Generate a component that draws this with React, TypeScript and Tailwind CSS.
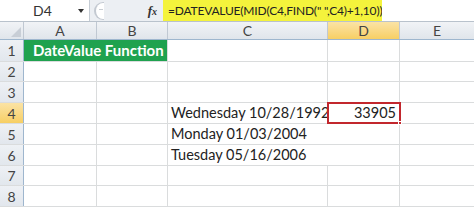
import React from "react";

const font = { fontFamily: "Lato, 'Open Sans', sans-serif" };

const rows = [
  { n: 1, h: "h-[22px]" },
  { n: 2, h: "h-[20px]" },
  { n: 3, h: "h-[21px]" },
  { n: 4, h: "h-[21px]" },
  { n: 5, h: "h-[21px]" },
  { n: 6, h: "h-[21px]" },
  { n: 7, h: "h-[20px]" },
  { n: 8, h: "h-[21px]" },
];

const cText: Record<number, string> = {
  4: "Wednesday 10/28/1992",
  5: "Monday 01/03/2004",
  6: "Tuesday 05/16/2006",
};

export default function App() {
  return (
    <div className="w-[474px] h-[209px] overflow-hidden bg-white text-[#222]" style={font}>
      {/* formula bar */}
      <div className="flex h-[22px] border-b border-[#b9c2cc]">
        <div className="w-[90px] flex items-center bg-white border-r border-[#c5ccd4] relative">
          <span className="ml-[33px] text-[14px] text-[#333]">D4</span>
          <span className="absolute left-[78px] top-[9px] w-0 h-0 border-l-[3px] border-r-[3px] border-t-[4px] border-l-transparent border-r-transparent border-t-[#333]" />
        </div>
        <div className="w-[73px] flex items-center bg-[#eceff3]">
          <div className="ml-[4px] w-[10px] h-[18px] rounded-l-full border-l-2 border-t border-b border-[#c3c9d1] bg-white flex items-start pl-[3px] pt-[4px]">
            <span className="block w-[4px] h-[1px] bg-[#c8cdd3] mt-[2px]" />
          </div>
          <span className="ml-auto mr-[6px] text-[13px] italic font-bold text-[#333]" style={{ fontFamily: "'Liberation Serif', serif" }}>
            f<span className="text-[10px]">x</span>
          </span>
        </div>
        <div className="w-[219px] bg-[#f4f33c] flex items-center pl-[5px] text-[12px] tracking-[-0.2px] text-[#222] whitespace-nowrap overflow-hidden">
          =DATEVALUE(MID(C4,FIND(" ",C4)+1,10))
        </div>
        <div className="flex-1 bg-white" />
      </div>
      {/* column headers */}
      <div className="flex h-[18px] border-b border-[#9eb6ce] bg-gradient-to-b from-[#f1f3f6] to-[#e0e5eb] text-[14px] text-[#444]">
        <div className="w-[24px] border-r border-[#c0c8d2] relative">
          <svg className="absolute right-[2px] bottom-[2px]" width="10" height="10"><polygon points="10,0 10,10 0,10" fill="#c8ced6" /></svg>
        </div>
        <div className="w-[73px] border-r border-[#c0c8d2] flex items-center justify-center">A</div>
        <div className="w-[71px] border-r border-[#c0c8d2] flex items-center justify-center">B</div>
        <div className="w-[160px] border-r border-[#c0c8d2] flex items-center justify-center">C</div>
        <div className="w-[72px] border-r border-[#c0c8d2] flex items-center justify-center bg-gradient-to-b from-[#fbe3a4] to-[#f7cf63]">D</div>
        <div className="flex-1 flex items-center justify-center">E</div>
      </div>
      {/* rows */}
      {rows.map((r) => (
        <div key={r.n} className={`flex ${r.h} border-b border-[#dadcdd]`}>
          <div
            className={`w-[24px] shrink-0 border-r border-[#9eb6ce] flex items-center justify-center text-[14px] text-[#444] ${
              r.n === 4 ? "bg-gradient-to-b from-[#fbe3a4] to-[#f7cf63]" : "bg-gradient-to-b from-[#eef1f5] to-[#e2e7ed]"
            }`}
          >
            {r.n}
          </div>
          {r.n === 1 ? (
            <div className="w-[144px] shrink-0 bg-[#1fa24f] text-white font-bold text-[15px] flex items-center pl-[9px] border-r border-[#dadcdd]">
              DateValue Function
            </div>
          ) : (
            <>
              <div className="w-[73px] shrink-0 border-r border-[#dadcdd]" />
              <div className="w-[71px] shrink-0 border-r border-[#dadcdd]" />
            </>
          )}
          <div className={`w-[160px] shrink-0 flex items-center pl-[3px] text-[14.5px] whitespace-nowrap overflow-visible relative z-10 ${cText[r.n] ? "" : "border-r border-[#dadcdd]"}`}>
            {cText[r.n] ?? ""}
          </div>
          <div className="w-[72px] shrink-0 border-r border-[#dadcdd] relative">
            {r.n === 4 && (
              <div className="absolute -left-[1px] -top-[1px] w-[74px] h-[22px] border-2 border-[#c2272d] flex items-center justify-end pr-[3px] text-[14.5px] z-20">
                33905
                <span className="absolute -right-[3px] -bottom-[3px] w-[4px] h-[4px] bg-[#c2272d] border border-white" />
              </div>
            )}
          </div>
          <div className="flex-1" />
        </div>
      ))}
    </div>
  );
}
